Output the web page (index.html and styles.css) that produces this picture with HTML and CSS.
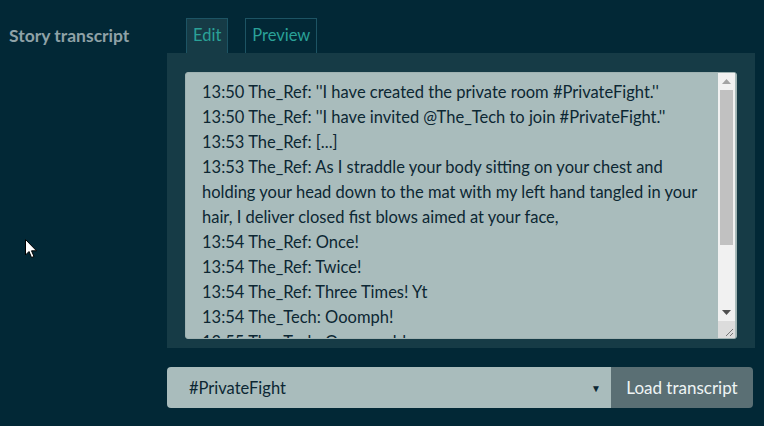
FILE: index.html
```html
<!DOCTYPE html>
<html>
<head>
<meta charset="utf-8">
<link rel="stylesheet" href="styles.css">
</head>
<body>
<div class="row">
  <div class="label">Story transcript</div>
  <div class="field">
    <div class="tabs">
      <div class="tab active">Edit</div>
      <div class="tab">Preview</div>
    </div>
    <div class="panel">
      <div class="area-wrap">
        <textarea class="transcript" spellcheck="false">13:50 The_Ref: ''I have created the private room #PrivateFight.''
13:50 The_Ref: ''I have invited @The_Tech to join #PrivateFight.''
13:53 The_Ref: [...]
13:53 The_Ref: As I straddle your body sitting on your chest and holding your head down to the mat with my left hand tangled in your hair, I deliver closed fist blows aimed at your face,
13:54 The_Ref: Once!
13:54 The_Ref: Twice!
13:54 The_Ref: Three Times! Yt
13:54 The_Tech: Ooomph!
13:55 The_Tech: Ooooouch!
13:55 The_Ref: [...]
13:56 The_Tech: Hmph.</textarea>
        <div class="scrollbar">
          <div class="sb-btn"><svg width="9" height="5" viewBox="0 0 9 5"><path d="M0 5 L4.5 0 L9 5 Z" fill="#a3a3a3"/></svg></div>
          <div class="sb-track"><div class="sb-thumb"></div></div>
          <div class="sb-btn"><svg width="9" height="5" viewBox="0 0 9 5"><path d="M0 0 L9 0 L4.5 5 Z" fill="#505050"/></svg></div>
          <div class="sb-corner"><svg width="17" height="17" viewBox="0 0 17 17"><path d="M8 15 L15 8 M12 15 L15 12" stroke="#777" stroke-width="1"/></svg></div>
        </div>
      </div>
    </div>
    <div class="loader">
      <div class="select"><span>#PrivateFight</span><span class="caret">&#9660;</span></div>
      <button class="load">Load transcript</button>
    </div>
  </div>
</div>
<svg class="cursor" width="13" height="20" viewBox="0 0 13 20">
  <path d="M0.5 0.5 L0.5 16 L4 12.5 L6.5 18.5 L9 17.5 L6.5 11.8 L11.5 11.8 Z" fill="#fff" stroke="#000" stroke-width="1"/>
</svg>
</body>
</html>
```
FILE: styles.css
```css
html, body {
  margin: 0;
  padding: 0;
  background: #022836;
  width: 764px;
  height: 426px;
  overflow: hidden;
  font-family: "Lato", "Open Sans", sans-serif;
}
.row {
  display: flex;
  padding-top: 18px;
}
.label {
  width: 167px;
  box-sizing: border-box;
  padding-left: 9px;
  line-height: 35px;
  font-size: 17.5px;
  font-weight: bold;
  color: #8fa2a7;
}
.field {
  width: 588px;
}
.tabs {
  display: flex;
  gap: 17px;
  padding-left: 19px;
  height: 35px;
}
.tab {
  box-sizing: border-box;
  height: 35px;
  padding: 0 6px;
  line-height: 33px;
  font-size: 16.5px;
  color: #2aa198;
  border: 1px solid #1d5464;
  border-bottom: none;
}
.tab.active {
  background: #163b46;
}
.panel {
  background: #163b46;
  padding: 19px 18px 9px 18px;
}
.area-wrap {
  position: relative;
  width: 552px;
  height: 267px;
}
.transcript {
  display: block;
  box-sizing: border-box;
  width: 552px;
  height: 267px;
  margin: 0;
  padding: 7px 33px 0 16px;
  background: #a9bcbc;
  color: #0c2733;
  border: 1px solid #9fb2b2;
  border-radius: 3px;
  font-family: "Lato", "Open Sans", sans-serif;
  font-size: 16.5px;
  line-height: 25px;
  outline: none;
  overflow: hidden;
  resize: none;
}
.scrollbar {
  position: absolute;
  top: 1px;
  right: 2px;
  bottom: 1px;
  width: 17px;
  display: flex;
  flex-direction: column;
  background: #f1f1f1;
}
.sb-btn {
  height: 17px;
  display: flex;
  align-items: center;
  justify-content: center;
}
.sb-track {
  flex: 1;
  padding: 0 2px;
}
.sb-thumb {
  height: 155px;
  background: #c1c1c1;
}
.sb-corner {
  height: 17px;
  background: #dcdcdc;
}
.sb-corner svg {
  display: block;
}
.loader {
  display: flex;
  margin-top: 19px;
  height: 41px;
  width: 586px;
}
.select {
  flex: 1;
  display: flex;
  align-items: center;
  justify-content: space-between;
  padding: 0 10px 0 22px;
  background: #a9bcbc;
  color: #0c2733;
  border-radius: 4px 0 0 4px;
  font-size: 16.5px;
}
.caret {
  font-size: 10px;
  color: #0c2733;
}
.load {
  width: 142px;
  border: none;
  margin: 0;
  padding: 0;
  background: #5a6f74;
  color: #eef4f4;
  border-radius: 0 4px 4px 0;
  font-family: "Lato", "Open Sans", sans-serif;
  font-size: 17px;
}
.cursor {
  position: absolute;
  left: 25px;
  top: 239px;
}
```
